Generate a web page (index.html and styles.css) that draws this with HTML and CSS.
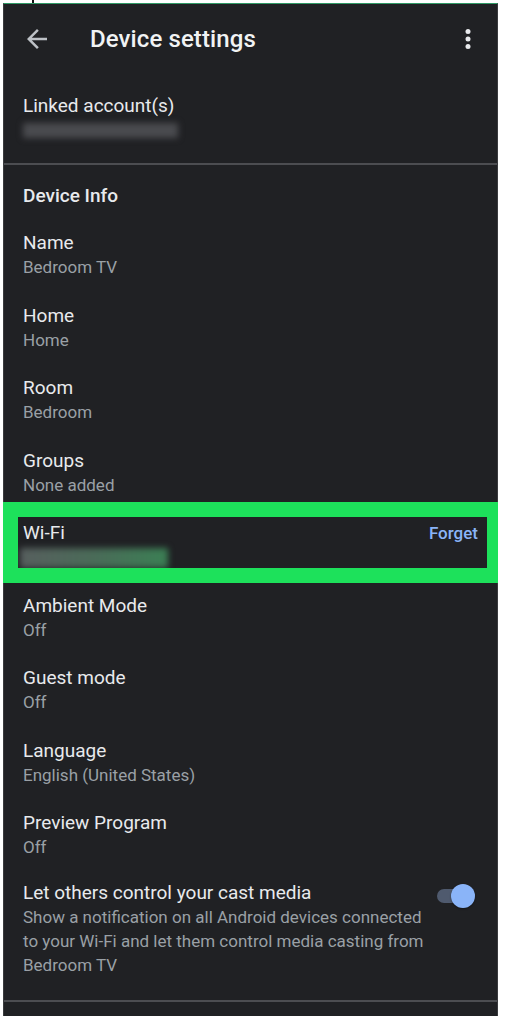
FILE: index.html
```html
<!DOCTYPE html>
<html lang="en">
<head>
<meta charset="utf-8">
<title>Device settings</title>
<link rel="stylesheet" href="styles.css">
</head>
<body>
<div class="topstrip"><span class="mark"></span></div>
<main class="panel">
  <header class="appbar">
    <svg class="back" viewBox="0 0 24 24" width="30" height="30" aria-hidden="true"><path d="M20 11H7.83l5.59-5.59L12 4l-8 8 8 8 1.41-1.41L7.83 13H20v-2z" fill="currentColor"/></svg>
    <h1 class="appbar-title">Device settings</h1>
    <svg class="more" viewBox="0 0 24 24" width="30" height="30" aria-hidden="true"><circle cx="12" cy="6" r="2" fill="currentColor"/><circle cx="12" cy="12" r="2" fill="currentColor"/><circle cx="12" cy="18" r="2" fill="currentColor"/></svg>
  </header>

  <section class="linked">
    <div class="title">Linked account(s)</div>
    <div class="blurline"><span class="smear smear-gray"></span></div>
  </section>

  <div class="divider"></div>

  <h2 class="section-head">Device Info</h2>

  <div class="item"><div class="title">Name</div><div class="sub">Bedroom TV</div></div>
  <div class="item"><div class="title">Home</div><div class="sub">Home</div></div>
  <div class="item"><div class="title">Room</div><div class="sub">Bedroom</div></div>
  <div class="item"><div class="title">Groups</div><div class="sub">None added</div></div>
  <div class="item wifi">
    <div class="row"><div class="title">Wi-Fi</div><div class="link">Forget</div></div>
    <div class="blurline"><span class="smear smear-green"></span></div>
    <div class="highlight"></div>
  </div>
  <div class="item"><div class="title">Ambient Mode</div><div class="sub">Off</div></div>
  <div class="item"><div class="title">Guest mode</div><div class="sub">Off</div></div>
  <div class="item"><div class="title">Language</div><div class="sub">English (United States)</div></div>
  <div class="item"><div class="title">Preview Program</div><div class="sub">Off</div></div>
  <div class="item toggle-item">
    <div class="text">
      <div class="title">Let others control your cast media</div>
      <div class="sub">Show a notification on all Android devices connected to your Wi-Fi and let them control media casting from Bedroom TV</div>
    </div>
    <div class="switch"><span class="track"></span><span class="thumb"></span></div>
  </div>

  <div class="divider"></div>
  <div class="bottom-space"></div>
</main>
</body>
</html>
```

FILE: styles.css
```css
html, body {
  margin: 0;
  padding: 0;
  background: #ffffff;
}
body {
  font-family: Roboto, "Noto Sans", "Liberation Sans", sans-serif;
  width: 505px;
}
.topstrip {
  height: 3px;
  position: relative;
}
.mark {
  position: absolute;
  left: 32px;
  top: 0;
  width: 2px;
  height: 3px;
  background: #111;
}
.panel {
  margin-left: 3px;
  width: 495px;
  box-sizing: border-box;
  background: #202124;
  border-top: 1px solid #2f9a66;
  border-left: 1px solid #3a3b3e;
  border-right: 1px solid #3a3b3e;
  color: #e8eaed;
}
.appbar {
  height: 69px;
  display: flex;
  align-items: center;
}
.back {
  color: #bdc1c6;
  margin-left: 18px;
  flex: none;
}
.appbar-title {
  margin: 0 0 0 38px;
  font-size: 24px;
  font-weight: 500;
  color: #f1f3f4;
  letter-spacing: 0.1px;
}
.more {
  margin-left: auto;
  margin-right: 14px;
  color: #e8eaed;
  flex: none;
}
.title {
  font-size: 19px;
  line-height: 24px;
  color: #e8eaed;
}
.sub {
  font-size: 17px;
  line-height: 24px;
  color: #9aa0a6;
}
.linked {
  padding: 21px 19px 21px;
}
.blurline {
  height: 24px;
  position: relative;
}
.smear {
  position: absolute;
  top: 5px;
  height: 15px;
  filter: blur(3px);
}
.smear-gray {
  left: 0;
  width: 155px;
  background: #4a4b4f;
}
.smear-green {
  left: -3px;
  top: 3px;
  height: 20px;
  width: 148px;
  background: linear-gradient(90deg, #575f5e 0%, #4a6b58 50%, #3b7f54 100%);
}
.divider {
  height: 2px;
  background: #4c4d51;
}
.section-head {
  margin: 0;
  padding: 19px 19px 11px;
  font-size: 19px;
  line-height: 24px;
  font-weight: 500;
  color: #e8eaed;
}
.item {
  padding: 12px 19px 12.5px;
}
.wifi {
  position: relative;
}
.row {
  display: flex;
  justify-content: space-between;
  align-items: center;
}
.link {
  font-size: 17px;
  font-weight: 500;
  color: #8ab4f8;
}
.highlight {
  position: absolute;
  top: -7px;
  left: -1px;
  right: -1px;
  height: 81px;
  box-sizing: border-box;
  border-style: solid;
  border-color: #1de15b;
  border-width: 15px 11px 15px 15px;
}
.toggle-item {
  display: flex;
  align-items: flex-start;
  padding-top: 9.5px;
  padding-right: 22px;
  padding-bottom: 23px;
}
.text {
  flex: 1;
  min-width: 0;
}
.switch {
  flex: none;
  width: 38px;
  height: 24px;
  position: relative;
  margin-top: 3px;
}
.track {
  position: absolute;
  left: 0;
  top: 5px;
  width: 34px;
  height: 14px;
  border-radius: 7px;
  background: #4f5a6e;
}
.thumb {
  position: absolute;
  right: 0;
  top: 0;
  width: 24px;
  height: 24px;
  border-radius: 50%;
  background: #8ab4f8;
  box-shadow: 0 1px 2px rgba(0,0,0,0.4);
}
.bottom-space {
  height: 14px;
}
```
